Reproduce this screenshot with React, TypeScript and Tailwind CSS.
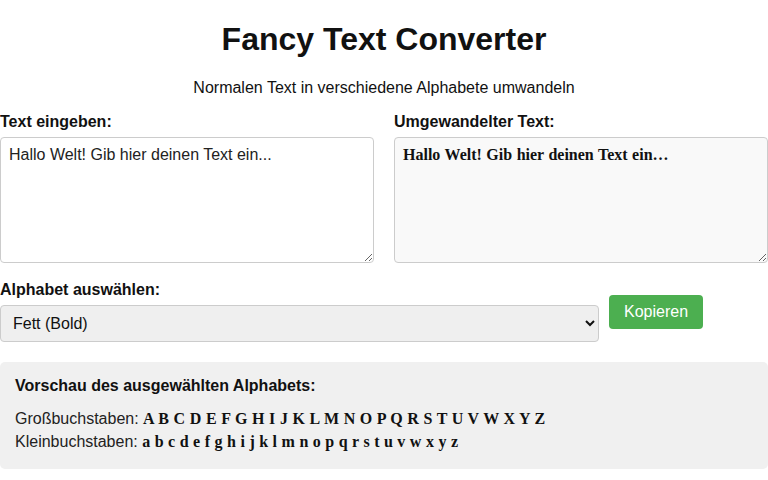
import { useState } from 'react';

const UPPER = 'ABCDEFGHIJKLMNOPQRSTUVWXYZ'.split('');
const LOWER = 'abcdefghijklmnopqrstuvwxyz'.split('');

export default function App() {
    const [text, setText] = useState('Hallo Welt! Gib hier deinen Text ein...');
    const [alphabet, setAlphabet] = useState('bold');

    return (
        <div className="w-[768px] min-h-[480px] bg-white text-[#111] font-['Liberation_Sans',Arial,sans-serif] text-base">
            <h1 className="text-[32px] leading-[37px] font-bold text-center pt-[21px]">Fancy Text Converter</h1>
            <p className="text-center leading-[18px] mt-[21px] mb-[16px]">Normalen Text in verschiedene Alphabete umwandeln</p>

            <div className="flex gap-5">
                <div className="flex-1">
                    <label className="block font-bold leading-[18px] mb-[6px]">Text eingeben:</label>
                    <textarea
                        value={text}
                        onChange={(e) => setText(e.target.value)}
                        className="block w-full h-[126px] border border-[#ccc] rounded-[4px] px-2 py-2 leading-[18px] bg-white text-[#222]"
                    />
                </div>
                <div className="flex-1">
                    <label className="block font-bold leading-[18px] mb-[6px]">Umgewandelter Text:</label>
                    {/* Fett: serif bold like the unicode math letters */}
                    <textarea
                        readOnly
                        value={text.replace('...', '…')}
                        className={
                            alphabet === 'bold'
                                ? "block w-full h-[126px] border border-[#ccc] rounded-[4px] px-2 py-2 leading-[18px] bg-[#f9f9f9] text-[#111] font-bold font-['Liberation_Serif','Times_New_Roman',serif] [word-spacing:0.5px]"
                                : "block w-full h-[126px] border border-[#ccc] rounded-[4px] px-2 py-2 leading-[18px] bg-[#f9f9f9] text-[#111] italic font-['Liberation_Serif','Times_New_Roman',serif]"
                        }
                    />
                </div>
            </div>

            <div className="flex items-center gap-[10px] mt-[18px]">
                <div className="w-[599px]">
                    <label className="block font-bold leading-[18px] mb-[6px]">Alphabet auswählen:</label>
                    <select
                        value={alphabet}
                        onChange={(e) => setAlphabet(e.target.value)}
                        className="block w-full h-[37px] border border-[#ccc] rounded-[4px] px-2 bg-[#efefef] text-[#111]"
                    >
                        <option value="bold">Fett (Bold)</option>
                        <option value="italic">Kursiv (Italic)</option>
                    </select>
                </div>
                <button className="bg-[#4caf50] text-white rounded-[4px] px-[15px] h-[34px] leading-[18px]">Kopieren</button>
            </div>

            <div className="mt-5 bg-[#f0f0f0] rounded-[5px] px-[15px] pt-[15px] pb-[16px]">
                <h3 className="font-bold leading-[18px] mb-[12px]">Vorschau des ausgewählten Alphabets:</h3>
                <div className="leading-[23px] text-[#222]">
                    <div>
                        Großbuchstaben:{' '}
                        <span className="text-[#111] font-bold font-['Liberation_Serif','Times_New_Roman',serif] [word-spacing:0.6px]">{UPPER.join(' ')}</span>
                    </div>
                    <div>
                        Kleinbuchstaben:{' '}
                        <span className="text-[#111] font-bold font-['Liberation_Serif','Times_New_Roman',serif] [word-spacing:0.5px]">{LOWER.join(' ')}</span>
                    </div>
                </div>
            </div>
        </div>
    );
}
